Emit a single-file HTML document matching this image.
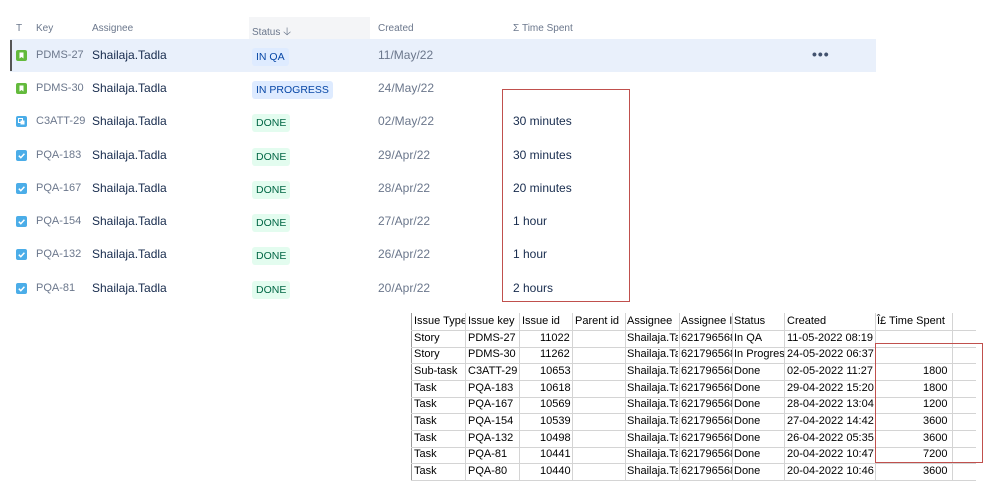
<!DOCTYPE html>
<html><head><meta charset="utf-8"><style>
body{margin:0;width:999px;height:481px;background:#fff;position:relative;overflow:hidden;font-family:"Liberation Sans",sans-serif}
.a{position:absolute;white-space:nowrap}
.h{font-size:10px;color:#6b778c;top:23px}
.k{font-size:11px;color:#6b778c}
.n{font-size:12px;color:#172b4d}
.c{font-size:12px;color:#6b778c}
.t{font-size:12px;color:#172b4d}
.loz{font-size:10.5px;padding:3px 4px;border-radius:3px;margin-top:-1px}
.qa{background:#deebff;color:#0747a6}
.dn{background:#e3fcef;color:#006644}
.ic{width:11px;height:11px;border-radius:2px}
.ic svg{display:block}
.x{font-size:11px;color:#000}
.vl{position:absolute;width:1px;background:#d4d4d4}
.hl{position:absolute;height:1px;background:#d4d4d4}
</style></head><body>
<div class="a" style="left:249px;top:17px;width:121px;height:22px;background:#f4f5f7"></div>
<div class="a" style="left:10px;top:39px;width:866px;height:33px;background:#e9f0fb"></div>
<div class="a" style="left:10px;top:40px;width:2px;height:31px;background:#555"></div>
<div class="a h" style="left:16px">T</div>
<div class="a h" style="left:36px">Key</div>
<div class="a h" style="left:92px">Assignee</div>
<div class="a h" style="left:252px">Status <span style="font-size:11px">&#129123;</span></div>
<div class="a h" style="left:378px">Created</div>
<div class="a h" style="left:513px">Σ Time Spent</div>
<div class="a" style="left:812px;top:46px;font-size:14px;font-weight:bold;color:#42526e;letter-spacing:1px">•••</div>

<div class="a ic" style="left:16px;top:50px;background:#63ba3c"><svg width="11" height="11"><path d="M3.5 2.5h4v6l-2-1.5-2 1.5z" fill="#fff"/></svg></div>
<div class="a ic" style="left:16px;top:83px;background:#63ba3c"><svg width="11" height="11"><path d="M3.5 2.5h4v6l-2-1.5-2 1.5z" fill="#fff"/></svg></div>
<div class="a ic" style="left:16px;top:116px;background:#4bade8"><svg width="11" height="11"><rect x="2.5" y="2.5" width="4" height="4" fill="none" stroke="#fff"/><rect x="4.5" y="4.5" width="4" height="4" fill="#fff"/></svg></div>
<div class="a ic" style="left:16px;top:150px;background:#4bade8"><svg width="11" height="11"><path d="M2.8 5.7l2 2 3.6-4" fill="none" stroke="#fff" stroke-width="1.5"/></svg></div>
<div class="a ic" style="left:16px;top:183px;background:#4bade8"><svg width="11" height="11"><path d="M2.8 5.7l2 2 3.6-4" fill="none" stroke="#fff" stroke-width="1.5"/></svg></div>
<div class="a ic" style="left:16px;top:216px;background:#4bade8"><svg width="11" height="11"><path d="M2.8 5.7l2 2 3.6-4" fill="none" stroke="#fff" stroke-width="1.5"/></svg></div>
<div class="a ic" style="left:16px;top:249px;background:#4bade8"><svg width="11" height="11"><path d="M2.8 5.7l2 2 3.6-4" fill="none" stroke="#fff" stroke-width="1.5"/></svg></div>
<div class="a ic" style="left:16px;top:283px;background:#4bade8"><svg width="11" height="11"><path d="M2.8 5.7l2 2 3.6-4" fill="none" stroke="#fff" stroke-width="1.5"/></svg></div>

<div class="a k" style="left:36px;top:49px">PDMS-27</div><div class="a n" style="left:92px;top:48px">Shailaja.Tadla</div><div class="a loz qa" style="left:252px;top:49px">IN QA</div><div class="a c" style="left:378px;top:48px">11/May/22</div>
<div class="a k" style="left:36px;top:82px">PDMS-30</div><div class="a n" style="left:92px;top:81px">Shailaja.Tadla</div><div class="a loz qa" style="left:252px;top:82px">IN PROGRESS</div><div class="a c" style="left:378px;top:81px">24/May/22</div>
<div class="a k" style="left:36px;top:115px">C3ATT-29</div><div class="a n" style="left:92px;top:114px">Shailaja.Tadla</div><div class="a loz dn" style="left:252px;top:115px">DONE</div><div class="a c" style="left:378px;top:114px">02/May/22</div><div class="a t" style="left:513px;top:114px">30 minutes</div>
<div class="a k" style="left:36px;top:149px">PQA-183</div><div class="a n" style="left:92px;top:148px">Shailaja.Tadla</div><div class="a loz dn" style="left:252px;top:149px">DONE</div><div class="a c" style="left:378px;top:148px">29/Apr/22</div><div class="a t" style="left:513px;top:148px">30 minutes</div>
<div class="a k" style="left:36px;top:182px">PQA-167</div><div class="a n" style="left:92px;top:181px">Shailaja.Tadla</div><div class="a loz dn" style="left:252px;top:182px">DONE</div><div class="a c" style="left:378px;top:181px">28/Apr/22</div><div class="a t" style="left:513px;top:181px">20 minutes</div>
<div class="a k" style="left:36px;top:215px">PQA-154</div><div class="a n" style="left:92px;top:214px">Shailaja.Tadla</div><div class="a loz dn" style="left:252px;top:215px">DONE</div><div class="a c" style="left:378px;top:214px">27/Apr/22</div><div class="a t" style="left:513px;top:214px">1 hour</div>
<div class="a k" style="left:36px;top:248px">PQA-132</div><div class="a n" style="left:92px;top:247px">Shailaja.Tadla</div><div class="a loz dn" style="left:252px;top:248px">DONE</div><div class="a c" style="left:378px;top:247px">26/Apr/22</div><div class="a t" style="left:513px;top:247px">1 hour</div>
<div class="a k" style="left:36px;top:282px">PQA-81</div><div class="a n" style="left:92px;top:281px">Shailaja.Tadla</div><div class="a loz dn" style="left:252px;top:282px">DONE</div><div class="a c" style="left:378px;top:281px">20/Apr/22</div><div class="a t" style="left:513px;top:281px">2 hours</div>
<div class="a" style="left:502px;top:89px;width:126px;height:211px;border:1px solid #c0504d"></div>

<div class="vl" style="left:411px;top:313px;height:168px;background:#999"></div>
<div class="vl" style="left:465px;top:313px;height:168px"></div>
<div class="vl" style="left:519px;top:313px;height:168px"></div>
<div class="vl" style="left:572px;top:313px;height:168px"></div>
<div class="vl" style="left:625px;top:313px;height:168px"></div>
<div class="vl" style="left:679px;top:313px;height:168px"></div>
<div class="vl" style="left:732px;top:313px;height:168px"></div>
<div class="vl" style="left:784px;top:313px;height:168px"></div>
<div class="vl" style="left:875px;top:313px;height:168px"></div>
<div class="vl" style="left:952px;top:313px;height:168px"></div>
<div class="hl" style="left:411px;top:330px;width:565px"></div>
<div class="hl" style="left:411px;top:347px;width:565px"></div>
<div class="hl" style="left:411px;top:363px;width:565px"></div>
<div class="hl" style="left:411px;top:380px;width:565px"></div>
<div class="hl" style="left:411px;top:397px;width:565px"></div>
<div class="hl" style="left:411px;top:413px;width:565px"></div>
<div class="hl" style="left:411px;top:430px;width:565px"></div>
<div class="hl" style="left:411px;top:447px;width:565px"></div>
<div class="hl" style="left:411px;top:463px;width:565px"></div>
<div class="hl" style="left:411px;top:480px;width:565px"></div>

<div class="a x" style="left:414px;top:315px;width:51px;overflow:hidden">Issue Type</div><div class="a x" style="left:468px;top:315px">Issue key</div><div class="a x" style="left:522px;top:315px">Issue id</div><div class="a x" style="left:575px;top:315px">Parent id</div><div class="a x" style="left:627px;top:315px">Assignee</div><div class="a x" style="left:681px;top:315px;width:51px;overflow:hidden">Assignee I</div><div class="a x" style="left:734px;top:315px">Status</div><div class="a x" style="left:787px;top:315px">Created</div><div class="a x" style="left:877px;top:315px">Î£ Time Spent</div>

<div class="a x" style="left:414px;top:332px">Story</div><div class="a x" style="left:468px;top:332px">PDMS-27</div><div class="a x" style="left:540px;top:332px">11022</div><div class="a x" style="left:627px;top:332px;width:51px;overflow:hidden">Shailaja.Tadla</div><div class="a x" style="left:681px;top:332px;width:51px;overflow:hidden">621796568</div><div class="a x" style="left:734px;top:332px">In QA</div><div class="a x" style="left:787px;top:332px">11-05-2022 08:19</div>
<div class="a x" style="left:414px;top:348px">Story</div><div class="a x" style="left:468px;top:348px">PDMS-30</div><div class="a x" style="left:540px;top:348px">11262</div><div class="a x" style="left:627px;top:348px;width:51px;overflow:hidden">Shailaja.Tadla</div><div class="a x" style="left:681px;top:348px;width:51px;overflow:hidden">621796568</div><div class="a x" style="left:734px;top:348px;width:50px;overflow:hidden">In Progress</div><div class="a x" style="left:787px;top:348px">24-05-2022 06:37</div>
<div class="a x" style="left:414px;top:365px">Sub-task</div><div class="a x" style="left:468px;top:365px">C3ATT-29</div><div class="a x" style="left:540px;top:365px">10653</div><div class="a x" style="left:627px;top:365px;width:51px;overflow:hidden">Shailaja.Tadla</div><div class="a x" style="left:681px;top:365px;width:51px;overflow:hidden">621796568</div><div class="a x" style="left:734px;top:365px">Done</div><div class="a x" style="left:787px;top:365px">02-05-2022 11:27</div><div class="a x" style="left:923px;top:365px">1800</div>
<div class="a x" style="left:414px;top:382px">Task</div><div class="a x" style="left:468px;top:382px">PQA-183</div><div class="a x" style="left:540px;top:382px">10618</div><div class="a x" style="left:627px;top:382px;width:51px;overflow:hidden">Shailaja.Tadla</div><div class="a x" style="left:681px;top:382px;width:51px;overflow:hidden">621796568</div><div class="a x" style="left:734px;top:382px">Done</div><div class="a x" style="left:787px;top:382px">29-04-2022 15:20</div><div class="a x" style="left:923px;top:382px">1800</div>
<div class="a x" style="left:414px;top:398px">Task</div><div class="a x" style="left:468px;top:398px">PQA-167</div><div class="a x" style="left:540px;top:398px">10569</div><div class="a x" style="left:627px;top:398px;width:51px;overflow:hidden">Shailaja.Tadla</div><div class="a x" style="left:681px;top:398px;width:51px;overflow:hidden">621796568</div><div class="a x" style="left:734px;top:398px">Done</div><div class="a x" style="left:787px;top:398px">28-04-2022 13:04</div><div class="a x" style="left:923px;top:398px">1200</div>
<div class="a x" style="left:414px;top:415px">Task</div><div class="a x" style="left:468px;top:415px">PQA-154</div><div class="a x" style="left:540px;top:415px">10539</div><div class="a x" style="left:627px;top:415px;width:51px;overflow:hidden">Shailaja.Tadla</div><div class="a x" style="left:681px;top:415px;width:51px;overflow:hidden">621796568</div><div class="a x" style="left:734px;top:415px">Done</div><div class="a x" style="left:787px;top:415px">27-04-2022 14:42</div><div class="a x" style="left:923px;top:415px">3600</div>
<div class="a x" style="left:414px;top:432px">Task</div><div class="a x" style="left:468px;top:432px">PQA-132</div><div class="a x" style="left:540px;top:432px">10498</div><div class="a x" style="left:627px;top:432px;width:51px;overflow:hidden">Shailaja.Tadla</div><div class="a x" style="left:681px;top:432px;width:51px;overflow:hidden">621796568</div><div class="a x" style="left:734px;top:432px">Done</div><div class="a x" style="left:787px;top:432px">26-04-2022 05:35</div><div class="a x" style="left:923px;top:432px">3600</div>
<div class="a x" style="left:414px;top:448px">Task</div><div class="a x" style="left:468px;top:448px">PQA-81</div><div class="a x" style="left:540px;top:448px">10441</div><div class="a x" style="left:627px;top:448px;width:51px;overflow:hidden">Shailaja.Tadla</div><div class="a x" style="left:681px;top:448px;width:51px;overflow:hidden">621796568</div><div class="a x" style="left:734px;top:448px">Done</div><div class="a x" style="left:787px;top:448px">20-04-2022 10:47</div><div class="a x" style="left:923px;top:448px">7200</div>
<div class="a x" style="left:414px;top:465px">Task</div><div class="a x" style="left:468px;top:465px">PQA-80</div><div class="a x" style="left:540px;top:465px">10440</div><div class="a x" style="left:627px;top:465px;width:51px;overflow:hidden">Shailaja.Tadla</div><div class="a x" style="left:681px;top:465px;width:51px;overflow:hidden">621796568</div><div class="a x" style="left:734px;top:465px">Done</div><div class="a x" style="left:787px;top:465px">20-04-2022 10:46</div><div class="a x" style="left:923px;top:465px">3600</div>
<div class="a" style="left:875px;top:343px;width:106px;height:118px;border:1px solid #c0504d"></div>
</body></html>
